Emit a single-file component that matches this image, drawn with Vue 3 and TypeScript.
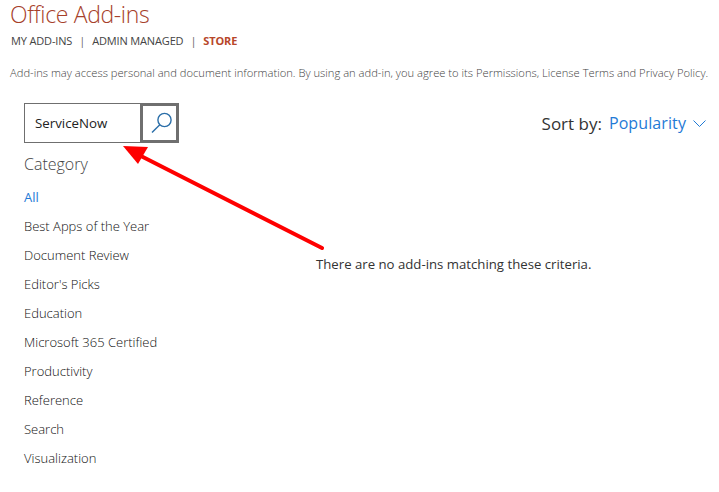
<script setup lang="ts">
const categories: string[] = [
  'All',
  'Best Apps of the Year',
  'Document Review',
  "Editor's Picks",
  'Education',
  'Microsoft 365 Certified',
  'Productivity',
  'Reference',
  'Search',
  'Visualization',
]
</script>

<template>
  <div class="page">
    <h1 class="title">Office Add-ins</h1>
    <nav class="tabs">
      <span>MY ADD-INS</span>
      <i class="sep">|</i>
      <span>ADMIN MANAGED</span>
      <i class="sep">|</i>
      <span class="active">STORE</span>
    </nav>
    <p class="notice">Add-ins may access personal and document information. By using an add-in, you agree to its Permissions, License Terms and Privacy Policy.</p>
    <div class="body">
      <aside class="side">
        <div class="search">
          <div class="field">ServiceNow</div>
          <div class="btn">
            <svg width="22" height="22" viewBox="0 0 22 22" fill="none" stroke="#2a6ea8" stroke-width="1.4">
              <circle cx="13.5" cy="8" r="6.6" />
              <path d="M8.8 12.7 L1 20.5" />
            </svg>
          </div>
        </div>
        <h2 class="cat-title">Category</h2>
        <ul class="cats">
          <li v-for="(c, i) in categories" :key="c" :class="{ on: i === 0 }">{{ c }}</li>
        </ul>
      </aside>
      <main class="main">
        <div class="sort">
          <span class="sort-label">Sort by:</span>
          <span class="sort-value">Popularity</span>
          <svg width="13" height="7" viewBox="0 0 13 7" fill="none" stroke="#1f7ad6" stroke-width="1">
            <path d="M0.5 0.5 L6.5 6.5 L12.5 0.5" />
          </svg>
        </div>
        <p class="empty">There are no add-ins matching these criteria.</p>
      </main>
    </div>
    <svg class="arrow" width="719" height="492" viewBox="0 0 719 492">
      <path d="M322 248 L137 154" stroke="#fe0000" stroke-width="4" stroke-linecap="round" fill="none" />
      <path d="M123 146 L148 147 L138 164 Z" fill="#fe0000" />
    </svg>
  </div>
</template>

<style>
html, body { margin: 0; background: #fff; }
</style>

<style scoped>
.page {
  position: relative;
  width: 719px;
  height: 492px;
  overflow: hidden;
  background: #fff;
  font-family: "Open Sans", "Noto Sans", sans-serif;
  color: #333;
}
.title {
  margin: 0;
  padding: 0 0 0 10px;
  height: 32px;
  font-size: 23px;
  line-height: 28px;
  font-weight: 300;
  letter-spacing: -0.35px;
  color: #a6402a;
  white-space: nowrap;
}
.tabs {
  display: flex;
  align-items: center;
  padding-left: 11px;
  height: 16px;
  font-size: 11px;
  letter-spacing: -0.15px;
  color: #444;
}
.sep {
  font-style: normal;
  margin: 0 7px;
  color: #666;
}
.active {
  color: #b7472a;
  font-weight: 700;
}
.notice {
  margin: 17px 0 0 10px;
  font-size: 11.2px;
  line-height: 16px;
  font-weight: 300;
  color: #444;
  white-space: nowrap;
}
.body {
  display: flex;
  margin-top: 22px;
  padding-left: 24px;
}
.side {
  width: 292px;
  flex: none;
}
.search {
  display: flex;
  width: 155px;
  height: 40px;
}
.field {
  box-sizing: border-box;
  width: 116px;
  height: 40px;
  border: 1px solid #6f6f6f;
  border-right: none;
  padding-left: 10px;
  font-size: 13.3px;
  line-height: 38px;
  color: #222;
}
.btn {
  box-sizing: border-box;
  width: 39px;
  height: 40px;
  border: 3px solid #6f6f6f;
  display: flex;
  align-items: center;
  justify-content: flex-end;
  padding-right: 3px;
}
.cat-title {
  margin: 9px 0 0;
  font-size: 16px;
  line-height: 24px;
  font-weight: 300;
  color: #444;
}
.cats {
  list-style: none;
  margin: 7px 0 0;
  padding: 0;
}
.cats li {
  height: 29px;
  font-size: 13px;
  line-height: 29px;
  font-weight: 300;
  color: #111;
  white-space: nowrap;
}
.cats li.on {
  color: #1f7ad6;
  font-weight: 400;
}
.main {
  flex: 1;
  min-width: 0;
}
.sort {
  display: flex;
  align-items: center;
  justify-content: flex-end;
  padding-right: 13px;
  height: 40px;
}
.sort-label {
  font-size: 17px;
  color: #333;
}
.sort-value {
  font-size: 16px;
  color: #1f7ad6;
  margin: 0 7px 0 7px;
  letter-spacing: 0.1px;
}
.empty {
  margin: 112px 0 0;
  font-size: 13.2px;
  line-height: 18px;
  color: #333;
  white-space: nowrap;
}
.arrow {
  position: absolute;
  left: 0;
  top: 0;
  pointer-events: none;
}
</style>
